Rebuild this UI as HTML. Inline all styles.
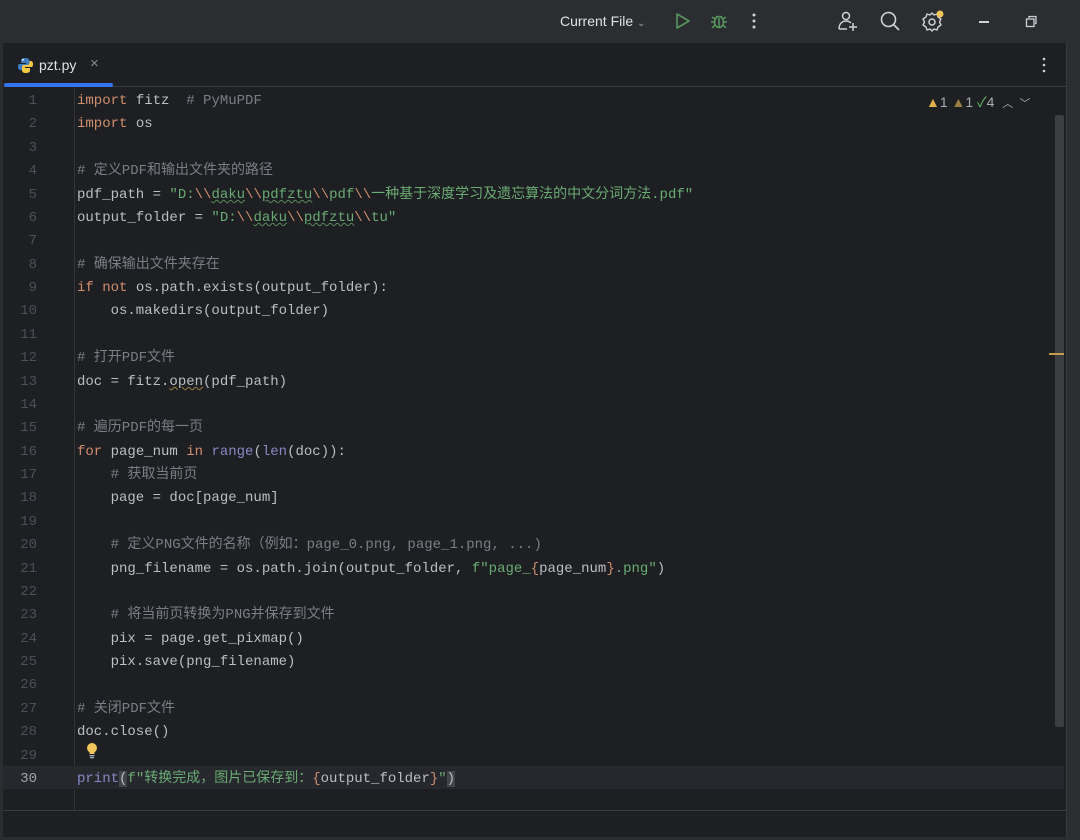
<!DOCTYPE html>
<html><head><meta charset="utf-8"><style>
body{margin:0;width:1080px;height:840px;background:#1e1f22;overflow:hidden;position:relative;font-family:"Liberation Sans","Noto Sans CJK SC",sans-serif}
.top{position:absolute;left:0;top:0;width:1080px;height:43px;background:#2b2d30}
.lstrip{position:absolute;left:0;top:43px;width:3px;height:797px;background:#2b2d30}
.rstrip{position:absolute;left:1066px;top:43px;width:14px;height:794px;background:#2b2d30;border-left:1px solid #393b40}
.tabsep{position:absolute;left:3px;top:86px;width:1063px;height:1px;background:#393b40}
.tabu{position:absolute;left:4px;top:83px;width:109px;height:4px;background:#3574f0;border-radius:2px}
.gut{position:absolute;left:74px;top:87px;width:1px;height:723px;background:#313438}
.cur{position:absolute;left:3px;top:766px;width:1061px;height:23px;background:#26282e}
.bot{position:absolute;left:3px;top:810px;width:1063px;height:27px;background:#1e1f22;border-top:1px solid #393b40}
.bstrip{position:absolute;left:0;top:837px;width:1080px;height:3px;background:#2b2d30}
.ln{position:absolute;left:0;width:37px;text-align:right;font:14px "Liberation Mono",monospace;color:#4b5059;line-height:23px;margin-top:2px}
.cd{position:absolute;left:77px;font:14px "Liberation Mono","Noto Sans CJK SC",monospace;color:#bcbec4;line-height:23px;white-space:pre;margin-top:2px}
.k{color:#cf8e6d}.c{color:#7a7e85}.s{color:#6aab73}.b{color:#8888c6}.u{text-decoration:underline wavy #5c8a5c;text-decoration-thickness:1px}
.t{color:#dfe1e5;font-size:14px;position:absolute}
.sb{position:absolute;left:1055px;top:115px;width:9px;height:612px;background:#3c3e42;border-radius:2px}
</style></head><body>
<div class="top"></div>
<div class="t" style="left:560px;top:13px">Current File <span style="font-size:10px;color:#9a9da3">&#8964;</span></div>
<svg style="position:absolute;left:674px;top:12px" width="18" height="18"><path d="M3 2 L15 9 L3 16 Z" fill="none" stroke="#57965c" stroke-width="1.6" stroke-linejoin="round"/></svg>
<svg style="position:absolute;left:709px;top:11px" width="20" height="20"><ellipse cx="10" cy="11" rx="4.5" ry="5.5" fill="none" stroke="#57965c" stroke-width="1.6"/><path d="M7 5 L8 6 M13 5 L12 6 M2 11 H5.5 M14.5 11 H18 M3 6 L6 8 M17 6 L14 8 M3 17 L6 14 M17 17 L14 14 M10 7 V16" stroke="#57965c" stroke-width="1.5" fill="none"/></svg>
<svg style="position:absolute;left:748px;top:12px" width="12" height="18"><circle cx="6" cy="3" r="1.5" fill="#ced0d6"/><circle cx="6" cy="9" r="1.5" fill="#ced0d6"/><circle cx="6" cy="15" r="1.5" fill="#ced0d6"/></svg>
<svg style="position:absolute;left:837px;top:10px" width="22" height="22"><circle cx="9" cy="6" r="3.5" fill="none" stroke="#ced0d6" stroke-width="1.5"/><path d="M2 19 C2 13 6 11 9 11 C11 11 13 12 14 13 M2 19 H10 M16 13 V21 M12 17 H20" fill="none" stroke="#ced0d6" stroke-width="1.5"/></svg>
<svg style="position:absolute;left:879px;top:10px" width="22" height="22"><circle cx="9.5" cy="9.5" r="7" fill="none" stroke="#ced0d6" stroke-width="1.6"/><path d="M14.5 14.5 L20 20" stroke="#ced0d6" stroke-width="1.8"/></svg>
<svg style="position:absolute;left:921px;top:9px" width="24" height="24"><circle cx="11" cy="13" r="3" fill="none" stroke="#ced0d6" stroke-width="1.5"/><path d="M11 4 L13 6 L16 5 L17 8 L20 10 L18.5 13 L20 16 L17 18 L16 21 L13 20 L11 22 L9 20 L6 21 L5 18 L2 16 L3.5 13 L2 10 L5 8 L6 5 L9 6 Z" fill="none" stroke="#ced0d6" stroke-width="1.4" stroke-linejoin="round"/><circle cx="19" cy="5" r="3.5" fill="#f2c55c"/></svg>
<div style="position:absolute;left:979px;top:21px;width:10px;height:1.5px;background:#ced0d6"></div>
<svg style="position:absolute;left:1025px;top:15px" width="14" height="14"><rect x="1.5" y="4" width="7.5" height="7.5" fill="none" stroke="#ced0d6" stroke-width="1.3"/><path d="M4 3 V1.5 H11 V8.5 H10" fill="none" stroke="#ced0d6" stroke-width="1.3"/></svg>
<div class="lstrip"></div><div class="rstrip"></div>
<svg style="position:absolute;left:17px;top:57px" width="17" height="17"><path d="M8 1 C4 1 4 3 4 4 V6 H9 V7 H2.5 C1 7 1 9 1 10 C1 12 2 13 3.5 13 H5 V11 C5 10 6 9 7 9 H11 C12 9 12.5 8 12.5 7 V4 C12.5 2 11 1 8 1 Z" fill="#3f7cc0"/><path d="M9 16 C13 16 13 14 13 13 V11 H8 V10 H14.5 C16 10 16 8 16 7 C16 5 15 4 13.5 4 H12.5 V6 C12.5 7 11.5 8 10.5 8 H6.5 C5.5 8 5 9 5 10 V13 C5 15 6 16 9 16 Z" fill="#f5c842"/><circle cx="6" cy="2.8" r=".9" fill="#fff"/></svg>
<div class="t" style="left:39px;top:57px">pzt.py</div>
<div style="position:absolute;left:90px;top:55px;color:#868a91;font-size:15px">×</div>
<svg style="position:absolute;left:1038px;top:56px" width="12" height="18"><circle cx="6" cy="3" r="1.3" fill="#ced0d6"/><circle cx="6" cy="9" r="1.3" fill="#ced0d6"/><circle cx="6" cy="15" r="1.3" fill="#ced0d6"/></svg>
<div class="tabsep"></div><div class="tabu"></div>
<div class="gut"></div>
<div class="cur"></div>
<div class="sb"></div>
<div style="position:absolute;left:1049px;top:353px;width:15px;height:2px;background:#c29e4a"></div>
<div style="position:absolute;left:926px;top:92px;font-size:14px;color:#a8adb5;white-space:pre"><span style="color:#e0b04a">▲</span>1 <span style="color:#9a8040">▲</span>1 <span style="color:#5fb865">✓</span>4  <span style="font-size:11px">︿  ﹀</span></div>
<div class="bot"></div><div class="bstrip"></div>
<svg style="position:absolute;left:85px;top:742px" width="14" height="18"><circle cx="7" cy="6" r="5" fill="#f2c55c"/><rect x="4.5" y="10" width="5" height="2" fill="#f2c55c"/><rect x="4.5" y="13" width="5" height="1.3" fill="#a8adb5"/><rect x="5" y="15" width="4" height="1.3" fill="#a8adb5"/></svg>

<div class="ln" style="top:88px">1</div><div class="cd" style="top:88px"><span class="k">import</span> fitz  <span class="c"># PyMuPDF</span></div>
<div class="ln" style="top:111px">2</div><div class="cd" style="top:111px"><span class="k">import</span> os</div>
<div class="ln" style="top:135px">3</div>
<div class="ln" style="top:158px">4</div><div class="cd" style="top:158px"><span class="c"># 定义PDF和输出文件夹的路径</span></div>
<div class="ln" style="top:182px">5</div><div class="cd" style="top:182px">pdf_path = <span class="s">"D:<span class="k">\\</span><span class="u">daku</span><span class="k">\\</span><span class="u">pdfztu</span><span class="k">\\</span>pdf<span class="k">\\</span>一种基于深度学习及遗忘算法的中文分词方法.pdf"</span></div>
<div class="ln" style="top:205px">6</div><div class="cd" style="top:205px">output_folder = <span class="s">"D:<span class="k">\\</span><span class="u">daku</span><span class="k">\\</span><span class="u">pdfztu</span><span class="k">\\</span>tu"</span></div>
<div class="ln" style="top:228px">7</div>
<div class="ln" style="top:252px">8</div><div class="cd" style="top:252px"><span class="c"># 确保输出文件夹存在</span></div>
<div class="ln" style="top:275px">9</div><div class="cd" style="top:275px"><span class="k">if not</span> os.path.exists(output_folder):</div>
<div class="ln" style="top:298px">10</div><div class="cd" style="top:298px">    os.makedirs(output_folder)</div>
<div class="ln" style="top:322px">11</div>
<div class="ln" style="top:345px">12</div><div class="cd" style="top:345px"><span class="c"># 打开PDF文件</span></div>
<div class="ln" style="top:369px">13</div><div class="cd" style="top:369px">doc = fitz.<span style="text-decoration:underline wavy #9a8040;text-decoration-thickness:1px">open</span>(pdf_path)</div>
<div class="ln" style="top:392px">14</div>
<div class="ln" style="top:415px">15</div><div class="cd" style="top:415px"><span class="c"># 遍历PDF的每一页</span></div>
<div class="ln" style="top:439px">16</div><div class="cd" style="top:439px"><span class="k">for</span> page_num <span class="k">in</span> <span class="b">range</span>(<span class="b">len</span>(doc)):</div>
<div class="ln" style="top:462px">17</div><div class="cd" style="top:462px">    <span class="c"># 获取当前页</span></div>
<div class="ln" style="top:485px">18</div><div class="cd" style="top:485px">    page = doc[page_num]</div>
<div class="ln" style="top:509px">19</div>
<div class="ln" style="top:532px">20</div><div class="cd" style="top:532px">    <span class="c"># 定义PNG文件的名称（例如：page_0.png, page_1.png, ...)</span></div>
<div class="ln" style="top:556px">21</div><div class="cd" style="top:556px">    png_filename = os.path.join(output_folder, <span class="s">f"page_<span class="k">{</span><span style="color:#bcbec4">page_num</span><span class="k">}</span>.png"</span>)</div>
<div class="ln" style="top:579px">22</div>
<div class="ln" style="top:602px">23</div><div class="cd" style="top:602px">    <span class="c"># 将当前页转换为PNG并保存到文件</span></div>
<div class="ln" style="top:626px">24</div><div class="cd" style="top:626px">    pix = page.get_pixmap()</div>
<div class="ln" style="top:649px">25</div><div class="cd" style="top:649px">    pix.save(png_filename)</div>
<div class="ln" style="top:672px">26</div>
<div class="ln" style="top:696px">27</div><div class="cd" style="top:696px"><span class="c"># 关闭PDF文件</span></div>
<div class="ln" style="top:719px">28</div><div class="cd" style="top:719px">doc.close()</div>
<div class="ln" style="top:743px">29</div>
<div class="ln" style="top:766px;color:#a1a3ab">30</div><div class="cd" style="top:766px"><span class="b">print</span><span style="background:#43454a">(</span><span class="s">f"转换完成，图片已保存到：<span class="k">{</span><span style="color:#bcbec4">output_folder</span><span class="k">}</span>"</span><span style="background:#43454a">)</span></div>
</body></html>
